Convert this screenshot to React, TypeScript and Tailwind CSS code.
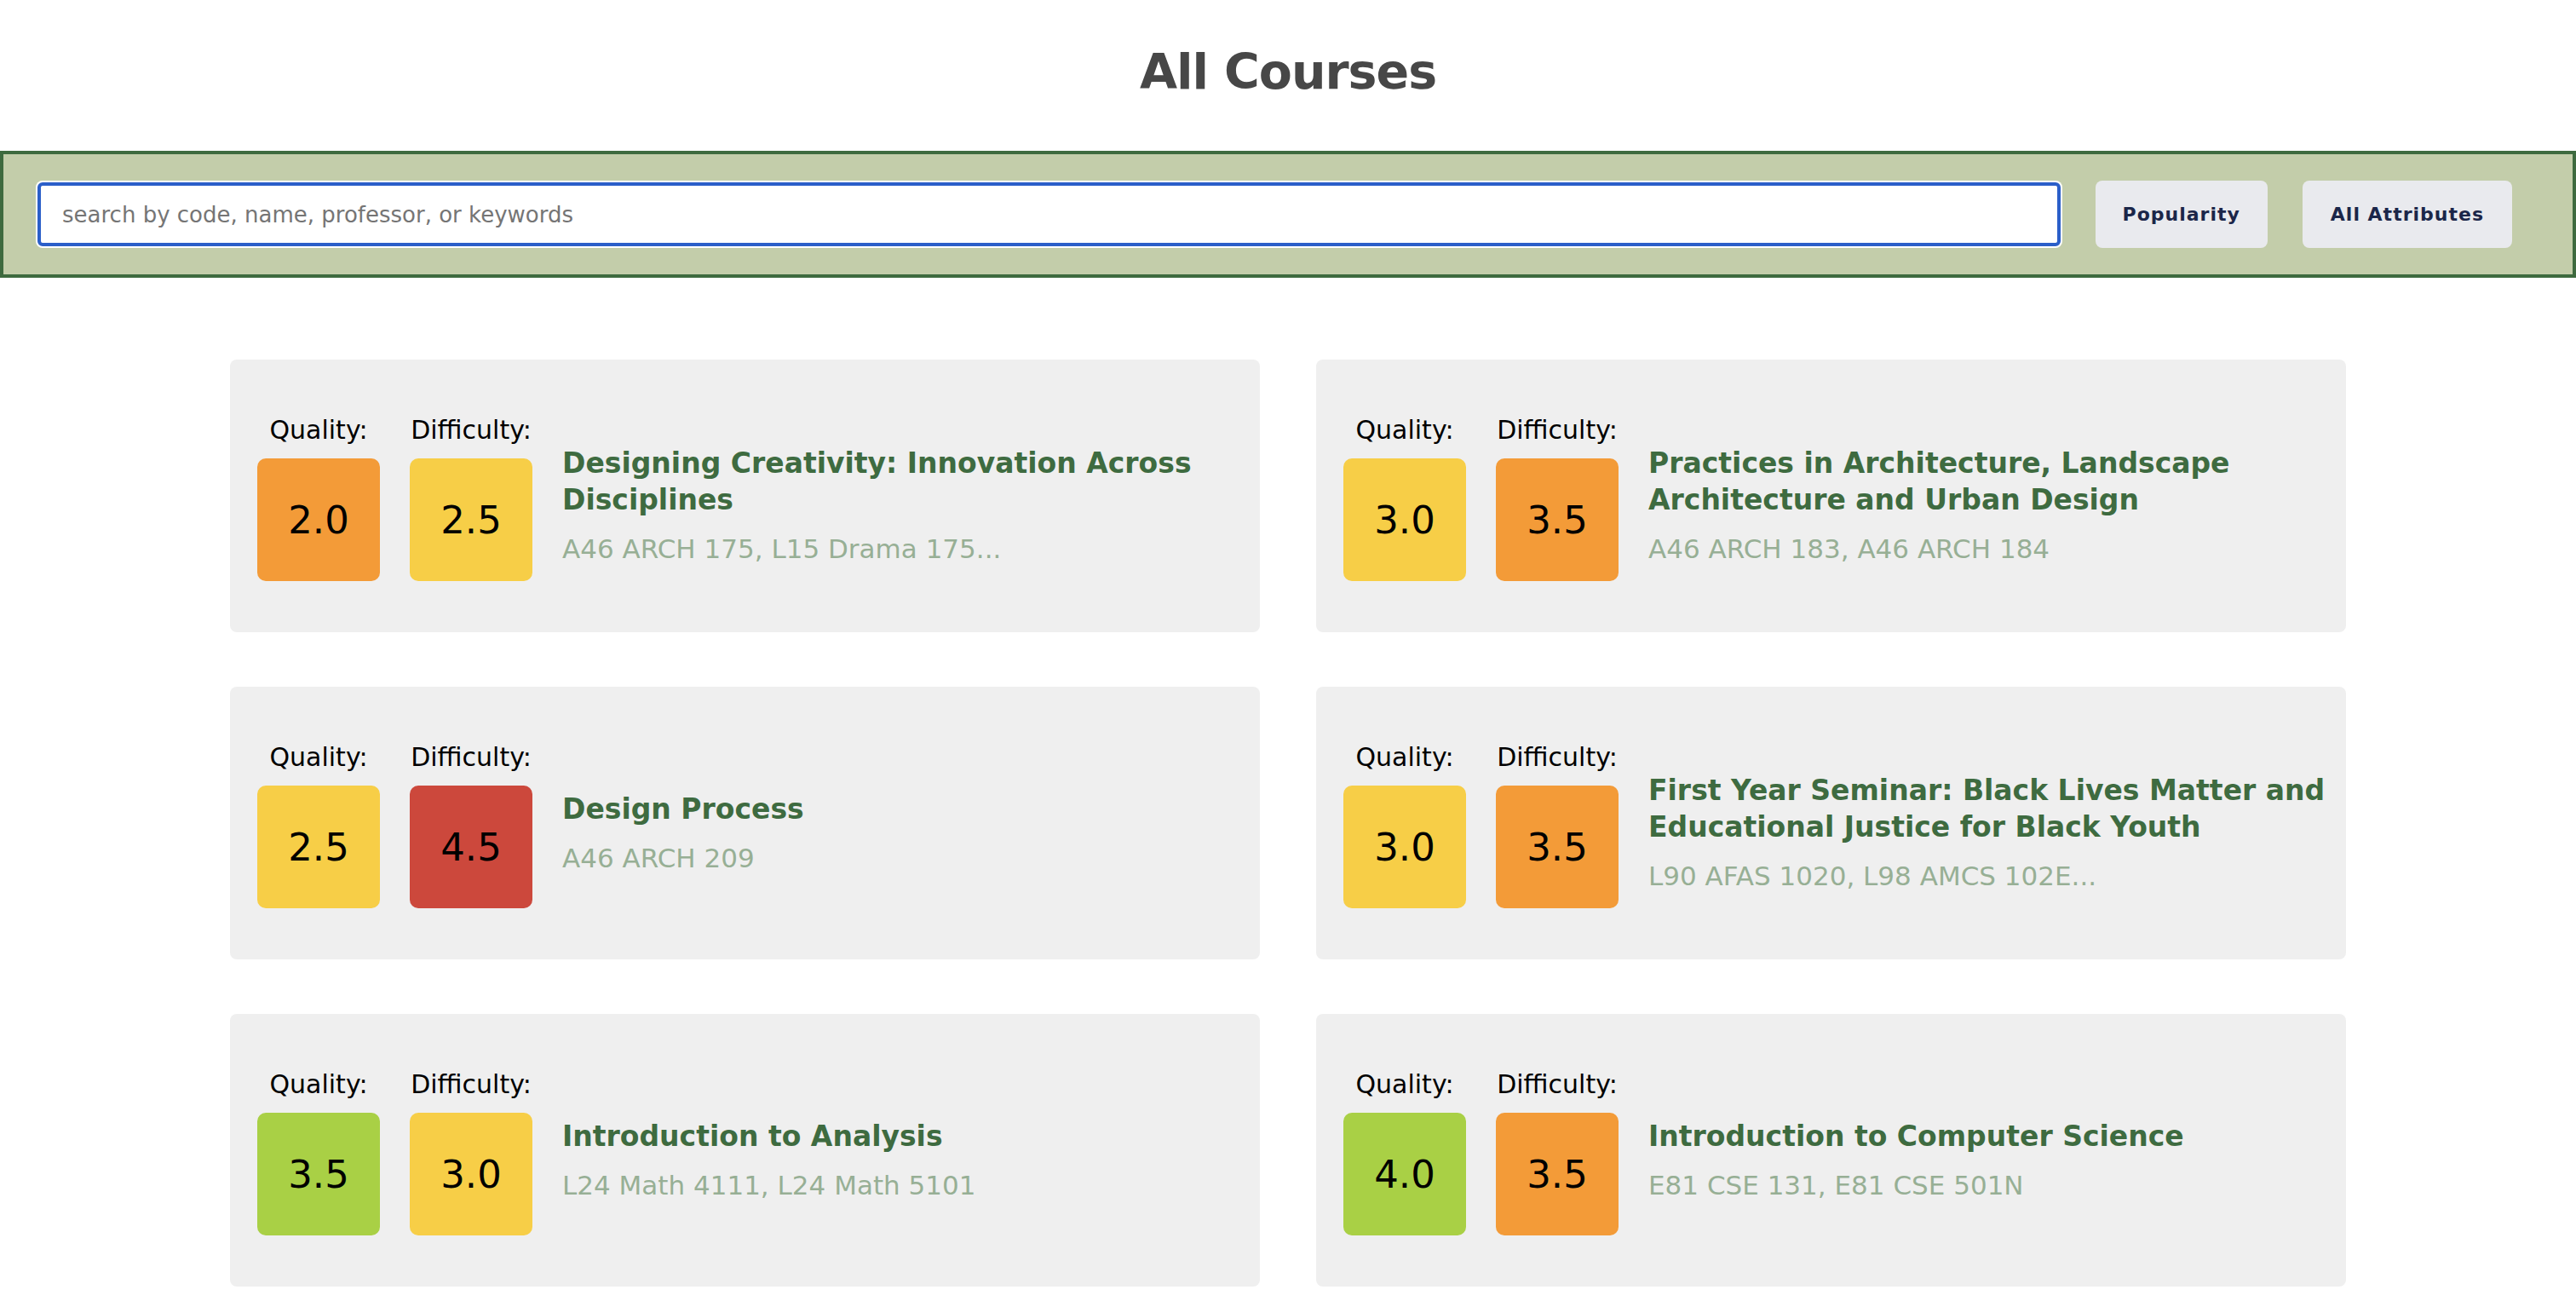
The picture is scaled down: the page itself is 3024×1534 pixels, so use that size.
import React from "react";

type Course = {
  title: string;
  codes: string;
  quality: number;
  difficulty: number;
};

const courses: Course[] = [
  { title: "Designing Creativity: Innovation Across Disciplines", codes: "A46 ARCH 175, L15 Drama 175...", quality: 2.0, difficulty: 2.5 },
  { title: "Practices in Architecture, Landscape Architecture and Urban Design", codes: "A46 ARCH 183, A46 ARCH 184", quality: 3.0, difficulty: 3.5 },
  { title: "Design Process", codes: "A46 ARCH 209", quality: 2.5, difficulty: 4.5 },
  { title: "First Year Seminar: Black Lives Matter and Educational Justice for Black Youth", codes: "L90 AFAS 1020, L98 AMCS 102E...", quality: 3.0, difficulty: 3.5 },
  { title: "Introduction to Analysis", codes: "L24 Math 4111, L24 Math 5101", quality: 3.5, difficulty: 3.0 },
  { title: "Introduction to Computer Science", codes: "E81 CSE 131, E81 CSE 501N", quality: 4.0, difficulty: 3.5 },
];

// quality: higher is better, difficulty: higher is harder
const qualityColor = (v: number) => {
  if (v >= 3.5) return "bg-[#a9d045]";
  if (v >= 2.5) return "bg-[#f7ce47]";
  if (v >= 1.5) return "bg-[#f39b38]";
  return "bg-[#cc483c]";
};

const difficultyColor = (v: number) => {
  if (v >= 4.0) return "bg-[#cc483c]";
  if (v >= 3.5) return "bg-[#f39b38]";
  if (v >= 2.5) return "bg-[#f7ce47]";
  return "bg-[#a9d045]";
};

function Rating({ label, value, color }: { label: string; value: number; color: string }) {
  return (
    <div className="flex flex-col items-center">
      <span className="text-[30px] leading-[36px] text-black">{label}</span>
      <div className={`mt-[15px] flex h-[144px] w-[144px] items-center justify-center rounded-[10px] ${color}`}>
        <span className="text-[45px] leading-none text-black">{value.toFixed(1)}</span>
      </div>
    </div>
  );
}

function CourseCard({ course }: { course: Course }) {
  return (
    <div className="flex items-center gap-[35px] rounded-[8px] bg-[#efefef] pl-[32px] pr-[14px] pt-[65px] pb-[60px]">
      <Rating label="Quality:" value={course.quality} color={qualityColor(course.quality)} />
      <Rating label="Difficulty:" value={course.difficulty} color={difficultyColor(course.difficulty)} />
      <div className="min-w-0 flex-1 pt-[15px]">
        <p className="text-[33px] font-bold leading-[43px] text-[#3e6b40]">{course.title}</p>
        <p className="mt-[18px] text-[31px] leading-[36px] text-[#97af95]">{course.codes}</p>
      </div>
    </div>
  );
}

export default function App() {
  return (
    <main className="min-h-screen bg-white font-['DejaVu_Sans',sans-serif]">
      <h1 className="pt-[50px] pb-[59px] text-center text-[57px] font-bold leading-[68px] tracking-[-1px] text-[#474747]">
        All Courses
      </h1>

      <div className="flex items-center gap-[41px] border-[4px] border-[#3e6a3f] bg-[#c3cdaa] py-[31px] pl-[40px] pr-[71px]">
        <input
          type="text"
          autoFocus
          placeholder="search by code, name, professor, or keywords"
          className="h-[75px] flex-1 rounded-[6px] border-[4px] border-[#2b5fc9] bg-white pl-[25px] text-[26px] text-black ring-2 ring-white outline-none placeholder:text-[#757575]"
        />
        <button className="h-[79px] rounded-[8px] bg-[#e9eaee] px-[32px] text-[22px] font-bold tracking-[1px] text-[#1b2649]">
          Popularity
        </button>
        <button className="h-[79px] rounded-[8px] bg-[#e9eaee] px-[33px] text-[22px] font-bold tracking-[1px] text-[#1b2649]">
          All Attributes
        </button>
      </div>

      <section className="mx-auto mt-[96px] grid w-[2484px] grid-cols-2 gap-x-[66px] gap-y-[64px] pb-[64px]">
        {courses.map((c) => (
          <CourseCard key={c.title} course={c} />
        ))}
      </section>
    </main>
  );
}
